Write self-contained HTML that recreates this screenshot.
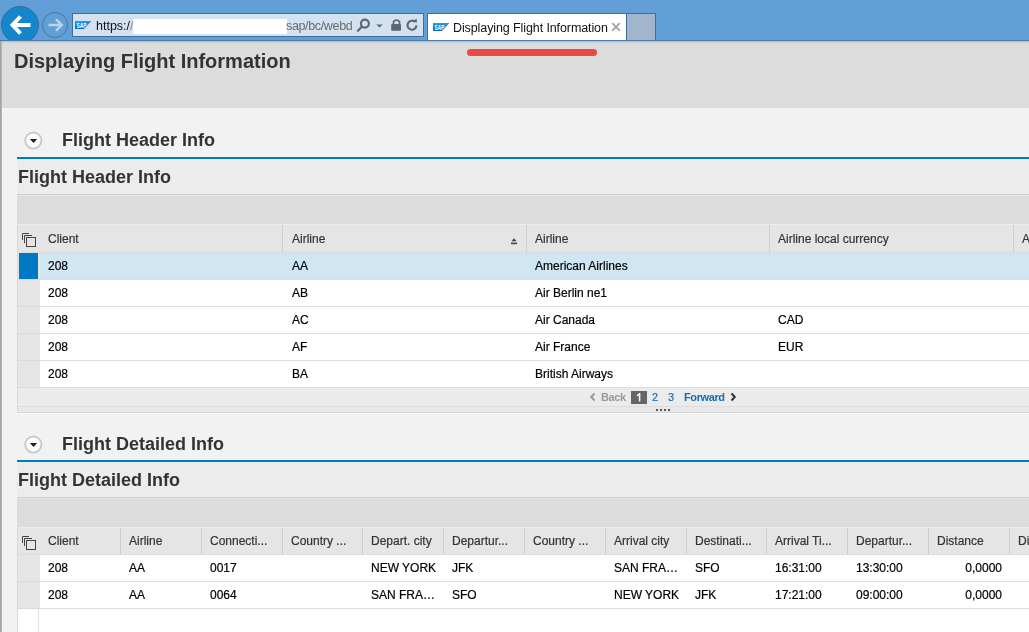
<!DOCTYPE html><html><head><meta charset="utf-8"><style>
*{margin:0;padding:0;box-sizing:border-box}
html,body{width:1029px;height:632px;overflow:hidden;background:#f2f2f2;font-family:"Liberation Sans",sans-serif;position:relative}
.a{position:absolute}
.chrome,.sec,.ptitle,.txt,.hd,.tt,.pg,.pgn{will-change:transform}
.chrome{font-size:12.5px;color:#111;white-space:nowrap}
.sec{font-size:18px;font-weight:bold;color:#333;white-space:nowrap}
.circ{width:18px;height:18px;border-radius:50%;background:#fff;border:2px solid #cfcfcf}
.circ:after{content:"";position:absolute;left:4px;top:6px;border-left:4px solid transparent;border-right:4px solid transparent;border-top:5px solid #333}
.bl{height:2px;background:#007cc0}
.ptitle{font-size:18px;font-weight:bold;color:#333;white-space:nowrap}
.txt{-webkit-text-stroke:0.2px #000;font-size:12px;color:#000;white-space:nowrap;line-height:14px}
.pg{font-size:11px;font-weight:bold;letter-spacing:-0.4px;white-space:nowrap;line-height:13px}
.pgn{font-size:11px;-webkit-text-stroke:0.15px currentColor;white-space:nowrap;line-height:14px}
.hd{-webkit-text-stroke:0.2px #333;font-size:12px;color:#333;white-space:nowrap;line-height:14px}
</style></head><body>
<div class="a" style="left:0;top:0;width:1029px;height:41px;background:#629fd6;border-bottom:1px solid #4d7fae"></div>
<div class="a" style="left:1px;top:6px;width:38px;height:38px;border-radius:50%;background:#1486cc;border:1px solid #3a6b99"></div>
<svg class="a" style="left:0;top:0" width="40" height="40" viewBox="0 0 40 40"><path d="M12.5 25 H30.5 M20.5 16.5 L12.5 25 L20.5 33.5" stroke="#fff" stroke-width="4" fill="none" stroke-linejoin="miter"/></svg>
<div class="a" style="left:42px;top:12px;width:26px;height:26px;border-radius:50%;border:1px solid #4677a6"></div>
<svg class="a" style="left:40px;top:10px" width="30" height="30" viewBox="0 0 30 30"><path d="M8.5 15 H21.5 M16 9.3 L21.8 15 L16 20.7" stroke="#bcd3ec" stroke-width="2.4" fill="none"/></svg>
<div class="a" style="left:72px;top:13px;width:352px;height:24px;background:#d3e2f1;border:1px solid #3f6f9e"></div>
<div class="a" style="left:427px;top:13px;width:200px;height:28px;background:#fff;border:1px solid #3f6f9e;border-bottom:none"></div>
<div class="a" style="left:626px;top:13px;width:30px;height:28px;background:#a1b5cc;border:1px solid #3f6f9e;border-bottom:none"></div>
<div class="a" style="left:0;top:40px;width:1029px;height:1px;background:#4a7cab"></div>
<svg class="a" style="left:75px;top:21px" width="17" height="8" viewBox="0 0 17 8"><defs><linearGradient id="g1" x1="0" y1="0" x2="0" y2="1"><stop offset="0" stop-color="#1aa3ea"/><stop offset="1" stop-color="#0a66c6"/></linearGradient></defs><path d="M0 0H16.5L9 8H0Z" fill="url(#g1)"/><text x="1.5" y="6.6" font-family="Liberation Sans" font-weight="bold" font-size="7" fill="#fff" textLength="10" lengthAdjust="spacingAndGlyphs">SAP</text></svg>
<svg class="a" style="left:433px;top:23px" width="17" height="8" viewBox="0 0 17 8"><defs><linearGradient id="g2" x1="0" y1="0" x2="0" y2="1"><stop offset="0" stop-color="#1aa3ea"/><stop offset="1" stop-color="#0a66c6"/></linearGradient></defs><path d="M0 0H16.5L9 8H0Z" fill="url(#g2)"/><text x="1.5" y="6.6" font-family="Liberation Sans" font-weight="bold" font-size="7" fill="#fff" textLength="10" lengthAdjust="spacingAndGlyphs">SAP</text></svg>
<div class="a chrome" style="left:96px;top:18.5px">https:/<span style="color:#888">/</span></div>
<div class="a" style="left:133px;top:19px;width:154px;height:15px;background:#fff"></div>
<div class="a chrome" style="left:286px;top:18.5px;color:#6a6a6a;letter-spacing:-0.35px">sap/bc/webd</div>
<div class="a chrome" style="left:453px;top:21px;letter-spacing:-0.1px">Displaying Flight Information</div>
<svg class="a" style="left:350px;top:12px" width="75" height="28" viewBox="0 0 75 28"><circle cx="14.9" cy="11.6" r="4.0" fill="none" stroke="#5d6771" stroke-width="2.2"/><path d="M11.8 14.8 L7.9 18.7" stroke="#5d6771" stroke-width="2.3" stroke-linecap="round"/><path d="M26.2 12.4 H32.8 L29.5 15.5Z" fill="#5d6771"/><path d="M43.5 12 V9.8 A3.5 3.5 0 0 1 49.5 9.8 V12" fill="none" stroke="#5d6771" stroke-width="1.8"/><rect x="41.2" y="12" width="9.8" height="6.8" rx="0.8" fill="#5d6771"/><path d="M65.2 10 A4.5 4.5 0 1 0 66.5 13.4" fill="none" stroke="#5d6771" stroke-width="2.1"/><path d="M62.6 9.6 L67 10.6 L66.6 6.6Z" fill="#5d6771"/></svg>
<svg class="a" style="left:611px;top:22px" width="10" height="10" viewBox="0 0 10 10"><path d="M1.2 1.2 L8.8 8.8 M8.8 1.2 L1.2 8.8" stroke="#a3a3a3" stroke-width="1.8"/></svg>
<div class="a" style="left:2px;top:41px;width:1027px;height:67px;background:#dcdcdc"></div>
<div class="a tt" style="left:14px;top:50px;font-size:20px;font-weight:bold;color:#333;white-space:nowrap">Displaying Flight Information</div>
<div class="a" style="left:0;top:41px;width:1029px;height:3px;background:linear-gradient(#b8b8b8,#d2d2d2 50%,#dcdcdc)"></div>
<div class="a" style="left:0;top:41px;width:2px;height:591px;background:linear-gradient(to right,#9c9c9c,#bcbcbc)"></div>
<div class="a" style="left:467px;top:49px;width:130px;height:7px;border-radius:4px;background:#e84a43"></div>
<svg class="a" style="left:23px;top:130px" width="21" height="21" viewBox="0 0 21 21"><circle cx="10.35" cy="10.55" r="8.1" fill="#fff" stroke="#c9c9c9" stroke-width="1.9"/><path d="M6.9 8.9 H14.1 L10.5 13Z" fill="#222"/></svg>
<div class="a sec" style="left:62px;top:130px">Flight Header Info</div>
<div class="a" style="left:17px;top:158px;width:1012px;height:36px;background:#ececec"></div>
<div class="a bl" style="left:17px;top:157px;width:1012px"></div>
<div class="a ptitle" style="left:18px;top:167px">Flight Header Info</div>
<div class="a" style="left:17px;top:194px;width:1012px;height:1px;background:#cfcfcf"></div>
<div class="a" style="left:17px;top:195px;width:1012px;height:1px;background:#e6e6e6"></div>
<div class="a" style="left:17px;top:196px;width:1012px;height:29px;background:#dcdcdc"></div>
<div class="a" style="left:17px;top:224px;width:1012px;height:29px;background:#e5e5e5;border-top:1px solid #ececec;border-bottom:1px solid #dcdcdc"></div>
<svg class="a" style="left:22px;top:233px" width="14" height="14" viewBox="0 0 14 14"><path d="M0.5 7V0.5H7 M2.5 10V2.5H10" fill="none" stroke="#444" stroke-width="1"/><rect x="4.5" y="4.5" width="9" height="9" fill="none" stroke="#444" stroke-width="1"/></svg>
<div class="a" style="left:282px;top:225px;width:1px;height:27px;background:#cdcdcd"></div>
<div class="a" style="left:526px;top:225px;width:1px;height:27px;background:#cdcdcd"></div>
<div class="a" style="left:769px;top:225px;width:1px;height:27px;background:#cdcdcd"></div>
<div class="a" style="left:1013px;top:225px;width:1px;height:27px;background:#cdcdcd"></div>
<div class="a hd" style="left:48px;top:232px">Client</div>
<div class="a hd" style="left:292px;top:232px">Airline</div>
<div class="a hd" style="left:535px;top:232px">Airline</div>
<div class="a hd" style="left:778px;top:232px">Airline local currency</div>
<div class="a hd" style="left:1022px;top:232px">Airline</div>
<svg class="a" style="left:510px;top:238px" width="8" height="7" viewBox="0 0 8 7"><path d="M4 0.2 L6.6 3.2 H1.4Z" fill="#444"/><rect x="1" y="4.6" width="6" height="1.6" fill="#444"/></svg>
<div class="a" style="left:40px;top:253px;width:989px;height:27px;background:#d0e6f2;border-bottom:1px solid #dddddd"></div>
<div class="a" style="left:17px;top:253px;width:23px;height:27px;background:#e5e5e5;border-bottom:1px solid #dadada"></div>
<div class="a" style="left:19px;top:253px;width:19px;height:26px;background:#0079c4"></div>
<div class="a txt" style="left:48px;top:259px">208</div>
<div class="a txt" style="left:292px;top:259px">AA</div>
<div class="a txt" style="left:535px;top:259px">American Airlines</div>
<div class="a" style="left:40px;top:280px;width:989px;height:27px;background:#ffffff;border-bottom:1px solid #dddddd"></div>
<div class="a" style="left:17px;top:280px;width:23px;height:27px;background:#e5e5e5;border-bottom:1px solid #dadada"></div>
<div class="a txt" style="left:48px;top:286px">208</div>
<div class="a txt" style="left:292px;top:286px">AB</div>
<div class="a txt" style="left:535px;top:286px">Air Berlin ne1</div>
<div class="a" style="left:40px;top:307px;width:989px;height:27px;background:#ffffff;border-bottom:1px solid #dddddd"></div>
<div class="a" style="left:17px;top:307px;width:23px;height:27px;background:#e5e5e5;border-bottom:1px solid #dadada"></div>
<div class="a txt" style="left:48px;top:313px">208</div>
<div class="a txt" style="left:292px;top:313px">AC</div>
<div class="a txt" style="left:535px;top:313px">Air Canada</div>
<div class="a txt" style="left:778px;top:313px">CAD</div>
<div class="a" style="left:40px;top:334px;width:989px;height:27px;background:#ffffff;border-bottom:1px solid #dddddd"></div>
<div class="a" style="left:17px;top:334px;width:23px;height:27px;background:#e5e5e5;border-bottom:1px solid #dadada"></div>
<div class="a txt" style="left:48px;top:340px">208</div>
<div class="a txt" style="left:292px;top:340px">AF</div>
<div class="a txt" style="left:535px;top:340px">Air France</div>
<div class="a txt" style="left:778px;top:340px">EUR</div>
<div class="a" style="left:40px;top:361px;width:989px;height:27px;background:#ffffff;border-bottom:1px solid #dddddd"></div>
<div class="a" style="left:17px;top:361px;width:23px;height:27px;background:#e5e5e5;border-bottom:1px solid #dadada"></div>
<div class="a txt" style="left:48px;top:367px">208</div>
<div class="a txt" style="left:292px;top:367px">BA</div>
<div class="a txt" style="left:535px;top:367px">British Airways</div>
<div class="a" style="left:17px;top:388px;width:1012px;height:18px;background:#ebebeb"></div>
<div class="a" style="left:17px;top:406px;width:1012px;height:1px;background:#dedede"></div>
<div class="a" style="left:17px;top:407px;width:1012px;height:5px;background:#e8e8e8"></div>
<div class="a" style="left:17px;top:412px;width:1012px;height:1px;background:#d5d5d5"></div>
<div class="a" style="left:17px;top:413px;width:1012px;height:1px;background:#f8f8f8"></div>
<div class="a" style="left:17px;top:224px;width:1px;height:189px;background:#d9d9d9"></div>
<svg class="a" style="left:588px;top:392px" width="10" height="10" viewBox="0 0 10 10"><path d="M6.5 1.5 L3.2 5 L6.5 8.5" fill="none" stroke="#9a9a9a" stroke-width="2"/></svg>
<div class="a pg" style="left:601px;top:391px;color:#9a9a9a">Back</div>
<div class="a" style="left:631px;top:391px;width:16px;height:13px;background:#666"></div>
<svg class="a" style="left:631px;top:391px" width="16" height="13" viewBox="0 0 16 13"><path d="M8.6 2 V10.6 M8.6 2.4 Q7.8 4 5.9 4.8" fill="none" stroke="#fff" stroke-width="1.5"/></svg>
<div class="a pgn" style="left:652px;top:390px;color:#176eae">2</div>
<div class="a pgn" style="left:668px;top:390px;color:#176eae">3</div>
<div class="a pg" style="left:684px;top:391px;color:#176eae">Forward</div>
<svg class="a" style="left:728px;top:392px" width="10" height="10" viewBox="0 0 10 10"><path d="M3.5 1.5 L6.8 5 L3.5 8.5" fill="none" stroke="#333" stroke-width="2"/></svg>
<svg class="a" style="left:655px;top:409px" width="16" height="3" viewBox="0 0 16 3"><rect x="1" y="0" width="2" height="2" fill="#555"/><rect x="5" y="0" width="2" height="2" fill="#555"/><rect x="9" y="0" width="2" height="2" fill="#555"/><rect x="13" y="0" width="2" height="2" fill="#555"/></svg>
<svg class="a" style="left:23px;top:434px" width="21" height="21" viewBox="0 0 21 21"><circle cx="10.35" cy="10.55" r="8.1" fill="#fff" stroke="#c9c9c9" stroke-width="1.9"/><path d="M6.9 8.9 H14.1 L10.5 13Z" fill="#222"/></svg>
<div class="a sec" style="left:62px;top:434px">Flight Detailed Info</div>
<div class="a" style="left:17px;top:461px;width:1012px;height:36px;background:#ececec"></div>
<div class="a bl" style="left:17px;top:460px;width:1012px"></div>
<div class="a ptitle" style="left:18px;top:470px">Flight Detailed Info</div>
<div class="a" style="left:17px;top:497px;width:1012px;height:1px;background:#cfcfcf"></div>
<div class="a" style="left:17px;top:498px;width:1012px;height:1px;background:#e6e6e6"></div>
<div class="a" style="left:17px;top:499px;width:1012px;height:29px;background:#dcdcdc"></div>
<div class="a" style="left:17px;top:527px;width:1012px;height:28px;background:#e5e5e5;border-top:1px solid #ececec;border-bottom:1px solid #dcdcdc"></div>
<svg class="a" style="left:22px;top:536px" width="14" height="14" viewBox="0 0 14 14"><path d="M0.5 7V0.5H7 M2.5 10V2.5H10" fill="none" stroke="#444" stroke-width="1"/><rect x="4.5" y="4.5" width="9" height="9" fill="none" stroke="#444" stroke-width="1"/></svg>
<div class="a" style="left:120px;top:528px;width:1px;height:26px;background:#cdcdcd"></div>
<div class="a" style="left:201px;top:528px;width:1px;height:26px;background:#cdcdcd"></div>
<div class="a" style="left:282px;top:528px;width:1px;height:26px;background:#cdcdcd"></div>
<div class="a" style="left:362px;top:528px;width:1px;height:26px;background:#cdcdcd"></div>
<div class="a" style="left:443px;top:528px;width:1px;height:26px;background:#cdcdcd"></div>
<div class="a" style="left:524px;top:528px;width:1px;height:26px;background:#cdcdcd"></div>
<div class="a" style="left:605px;top:528px;width:1px;height:26px;background:#cdcdcd"></div>
<div class="a" style="left:686px;top:528px;width:1px;height:26px;background:#cdcdcd"></div>
<div class="a" style="left:766px;top:528px;width:1px;height:26px;background:#cdcdcd"></div>
<div class="a" style="left:847px;top:528px;width:1px;height:26px;background:#cdcdcd"></div>
<div class="a" style="left:928px;top:528px;width:1px;height:26px;background:#cdcdcd"></div>
<div class="a" style="left:1009px;top:528px;width:1px;height:26px;background:#cdcdcd"></div>
<div class="a hd" style="left:48px;top:534px">Client</div>
<div class="a hd" style="left:129px;top:534px">Airline</div>
<div class="a hd" style="left:210px;top:534px">Connecti...</div>
<div class="a hd" style="left:291px;top:534px">Country ...</div>
<div class="a hd" style="left:371px;top:534px">Depart. city</div>
<div class="a hd" style="left:452px;top:534px">Departur...</div>
<div class="a hd" style="left:533px;top:534px">Country ...</div>
<div class="a hd" style="left:614px;top:534px">Arrival city</div>
<div class="a hd" style="left:695px;top:534px">Destinati...</div>
<div class="a hd" style="left:775px;top:534px">Arrival Ti...</div>
<div class="a hd" style="left:856px;top:534px">Departur...</div>
<div class="a hd" style="left:937px;top:534px">Distance</div>
<div class="a hd" style="left:1018px;top:534px">Di</div>
<div class="a" style="left:40px;top:555px;width:989px;height:27px;background:#fff;border-bottom:1px solid #dddddd"></div>
<div class="a" style="left:17px;top:555px;width:23px;height:27px;background:#e5e5e5;border-bottom:1px solid #dadada"></div>
<div class="a txt" style="left:48px;top:561px">208</div>
<div class="a txt" style="left:129px;top:561px">AA</div>
<div class="a txt" style="left:210px;top:561px">0017</div>
<div class="a txt" style="left:371px;top:561px">NEW YORK</div>
<div class="a txt" style="left:452px;top:561px">JFK</div>
<div class="a txt" style="left:614px;top:561px">SAN FRA…</div>
<div class="a txt" style="left:695px;top:561px">SFO</div>
<div class="a txt" style="left:775px;top:561px">16:31:00</div>
<div class="a txt" style="left:856px;top:561px">13:30:00</div>
<div class="a txt" style="left:928px;width:81px;text-align:right;padding-right:7px;top:561px">0,0000</div>
<div class="a" style="left:40px;top:582px;width:989px;height:27px;background:#fff;border-bottom:1px solid #dddddd"></div>
<div class="a" style="left:17px;top:582px;width:23px;height:27px;background:#e5e5e5;border-bottom:1px solid #dadada"></div>
<div class="a txt" style="left:48px;top:588px">208</div>
<div class="a txt" style="left:129px;top:588px">AA</div>
<div class="a txt" style="left:210px;top:588px">0064</div>
<div class="a txt" style="left:371px;top:588px">SAN FRA…</div>
<div class="a txt" style="left:452px;top:588px">SFO</div>
<div class="a txt" style="left:614px;top:588px">NEW YORK</div>
<div class="a txt" style="left:695px;top:588px">JFK</div>
<div class="a txt" style="left:775px;top:588px">17:21:00</div>
<div class="a txt" style="left:856px;top:588px">09:00:00</div>
<div class="a txt" style="left:928px;width:81px;text-align:right;padding-right:7px;top:588px">0,0000</div>
<div class="a" style="left:17px;top:609px;width:1012px;height:23px;background:#fff"></div>
<div class="a" style="left:38px;top:609px;width:1px;height:23px;background:#e0e0e0"></div>
<div class="a" style="left:17px;top:527px;width:1px;height:105px;background:#d9d9d9"></div>
</body></html>
